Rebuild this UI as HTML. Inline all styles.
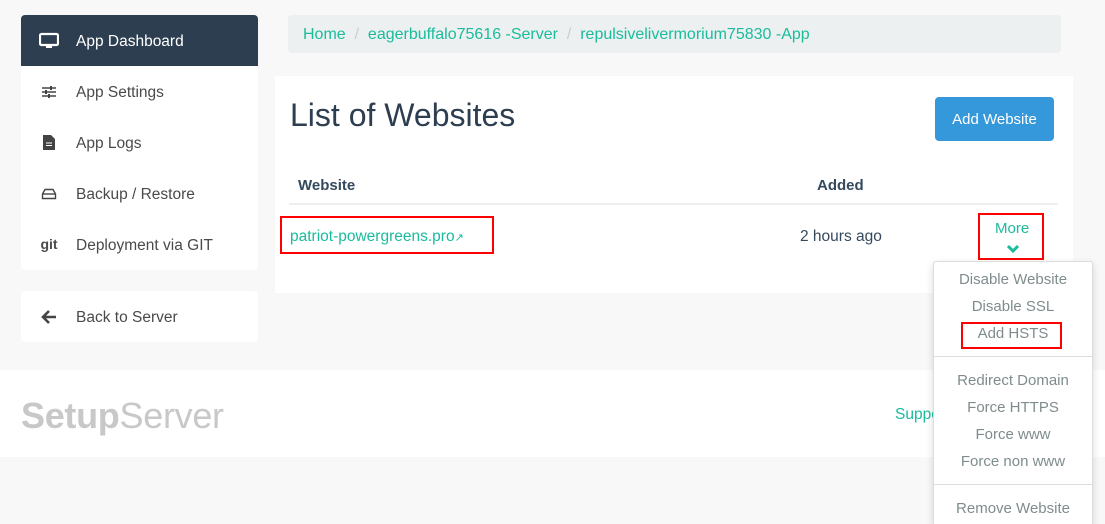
<!DOCTYPE html>
<html><head><meta charset="utf-8"><style>
*{box-sizing:border-box;margin:0;padding:0}
html,body{width:1105px;height:524px;overflow:hidden}
body{background:#f8f8f8;font-family:"Liberation Sans",sans-serif;position:relative;color:#34495e}
.a{position:absolute}
.side{left:21px;top:15px;width:237px;height:255px;background:#fff;border-radius:4px}
.item{position:absolute;left:0;width:237px;height:51px;font-size:15.5px;color:#4a4a4a;line-height:53px;padding-left:55px}
.item .ic{position:absolute;left:18px;top:0;width:20px;text-align:center;line-height:51px}
.act{background:#2c3e50;color:#fff;border-radius:4px 4px 0 0;top:0}
.g{color:#1abc9c}
.dd div{position:absolute;left:0;width:158px;text-align:center;font-size:15px;color:#7f8c8d;height:20px;line-height:20px}
.dd hr{position:absolute;left:0;width:158px;border:0;border-top:1px solid #ddd}
</style></head><body>
<div class="a side">
 <div class="item act"><span class="ic"><svg width="20" height="18" viewBox="0 0 20 18" style="vertical-align:middle"><rect x="1" y="2" width="18" height="11" rx="1.5" fill="none" stroke="#fff" stroke-width="2.2"/><rect x="7" y="14" width="6" height="2" fill="#fff"/></svg></span>App Dashboard</div>
 <div class="item" style="top:51px"><span class="ic"><svg width="16" height="14" viewBox="0 0 16 14" style="vertical-align:middle"><g stroke="#444" stroke-width="1.5"><line x1="1" y1="3" x2="15" y2="3"/><line x1="1" y1="7" x2="15" y2="7"/><line x1="1" y1="11" x2="15" y2="11"/></g><rect x="9" y="1" width="2" height="4" fill="#444"/><rect x="4" y="5" width="2" height="4" fill="#444"/><rect x="7" y="9" width="2" height="4" fill="#444"/></svg></span>App Settings</div>
 <div class="item" style="top:102px"><span class="ic"><svg width="14" height="17" viewBox="0 0 14 17" style="vertical-align:middle"><path d="M1 1h8l4 4v11H1z" fill="#444"/><g stroke="#fff" stroke-width="1"><line x1="4" y1="9" x2="10" y2="9"/><line x1="4" y1="11.5" x2="10" y2="11.5"/></g></svg></span>App Logs</div>
 <div class="item" style="top:153px"><span class="ic"><svg width="16" height="12" viewBox="0 0 16 12" style="vertical-align:middle"><path d="M1.5 6L4 1.5h8L14.5 6v4.5h-13z" fill="none" stroke="#444" stroke-width="1.4"/><line x1="1.5" y1="6" x2="14.5" y2="6" stroke="#444" stroke-width="1.4"/></svg></span>Backup / Restore</div>
 <div class="item" style="top:204px"><span class="ic" style="font-weight:bold;font-size:14px">git</span>Deployment via GIT</div>
</div>
<div class="a" style="left:21px;top:291px;width:237px;height:51px;background:#fff;border-radius:4px">
 <div class="item" style="top:0"><span class="ic"><svg width="16" height="14" viewBox="0 0 16 14" style="vertical-align:middle"><path d="M8 1L2 7l6 6M2 7h13" fill="none" stroke="#444" stroke-width="2.6"/></svg></span>Back to Server</div>
</div>
<div class="a" style="left:288px;top:15px;width:773px;height:38px;background:#ecf0f1;border-radius:4px;font-size:16px;line-height:40px;padding-left:15px"><span class="g">Home</span><span style="color:#ccc">&nbsp;&nbsp;/&nbsp;&nbsp;</span><span class="g">eagerbuffalo75616 -Server</span><span style="color:#ccc">&nbsp;&nbsp;/&nbsp;&nbsp;</span><span class="g">repulsivelivermorium75830 -App</span></div>
<div class="a" style="left:275px;top:76px;width:798px;height:217px;background:#fff"></div>
<div class="a" style="left:290px;top:97px;font-size:32px;color:#2c3e50">List of Websites</div>
<div class="a" style="left:935px;top:97px;width:119px;height:44px;background:#3498db;border-radius:4px;color:#fff;font-size:15px;line-height:46px;text-align:center">Add Website</div>
<div class="a" style="left:298px;top:177px;font-size:15px;font-weight:bold">Website</div>
<div class="a" style="left:817px;top:177px;font-size:15px;font-weight:bold">Added</div>
<div class="a" style="left:289px;top:203px;width:769px;height:2px;background:#eee"></div>
<div class="a" style="left:280px;top:216px;width:214px;height:38px;border:2px solid #f00"></div>
<div class="a g" style="left:290px;top:228px;font-size:15.5px">patriot-powergreens.pro<span style="font-size:11px">&#x2197;</span></div>
<div class="a" style="left:800px;top:228px;font-size:15.5px">2 hours ago</div>
<div class="a" style="left:978px;top:213px;width:66px;height:47px;border:2px solid #f00"></div>
<div class="a g" style="left:995px;top:220px;font-size:15px">More</div>
<svg class="a" style="left:1006px;top:244px" width="14" height="10" viewBox="0 0 14 10"><path d="M2 2l5 5 5-5" fill="none" stroke="#1abc9c" stroke-width="3"/></svg>
<div class="a" style="left:0;top:370px;width:1105px;height:87px;background:#fff"></div>
<div class="a" style="left:21px;top:395px;font-size:36px;color:#c8c8c8;letter-spacing:-0.3px"><b>Setup</b>Server</div>
<div class="a g" style="left:895px;top:406px;font-size:15.5px">Support</div>
<div class="a dd" style="left:933px;top:261px;width:160px;height:263px;background:#fff;border:1px solid #ddd;border-bottom:0;border-radius:3px 3px 0 0;box-shadow:0 3px 8px rgba(0,0,0,.15)">
 <div style="top:8px">Disable Website</div>
 <div style="top:35px">Disable SSL</div>
 <div style="top:62px">Add HSTS</div>
 <hr style="top:94px">
 <div style="top:109px">Redirect Domain</div>
 <div style="top:136px">Force HTTPS</div>
 <div style="top:163px">Force www</div>
 <div style="top:190px">Force non www</div>
 <hr style="top:222px">
 <div style="top:237px">Remove Website</div>
</div>
<div class="a" style="left:961px;top:322px;width:101px;height:27px;border:2px solid #f00"></div>
</body></html>
